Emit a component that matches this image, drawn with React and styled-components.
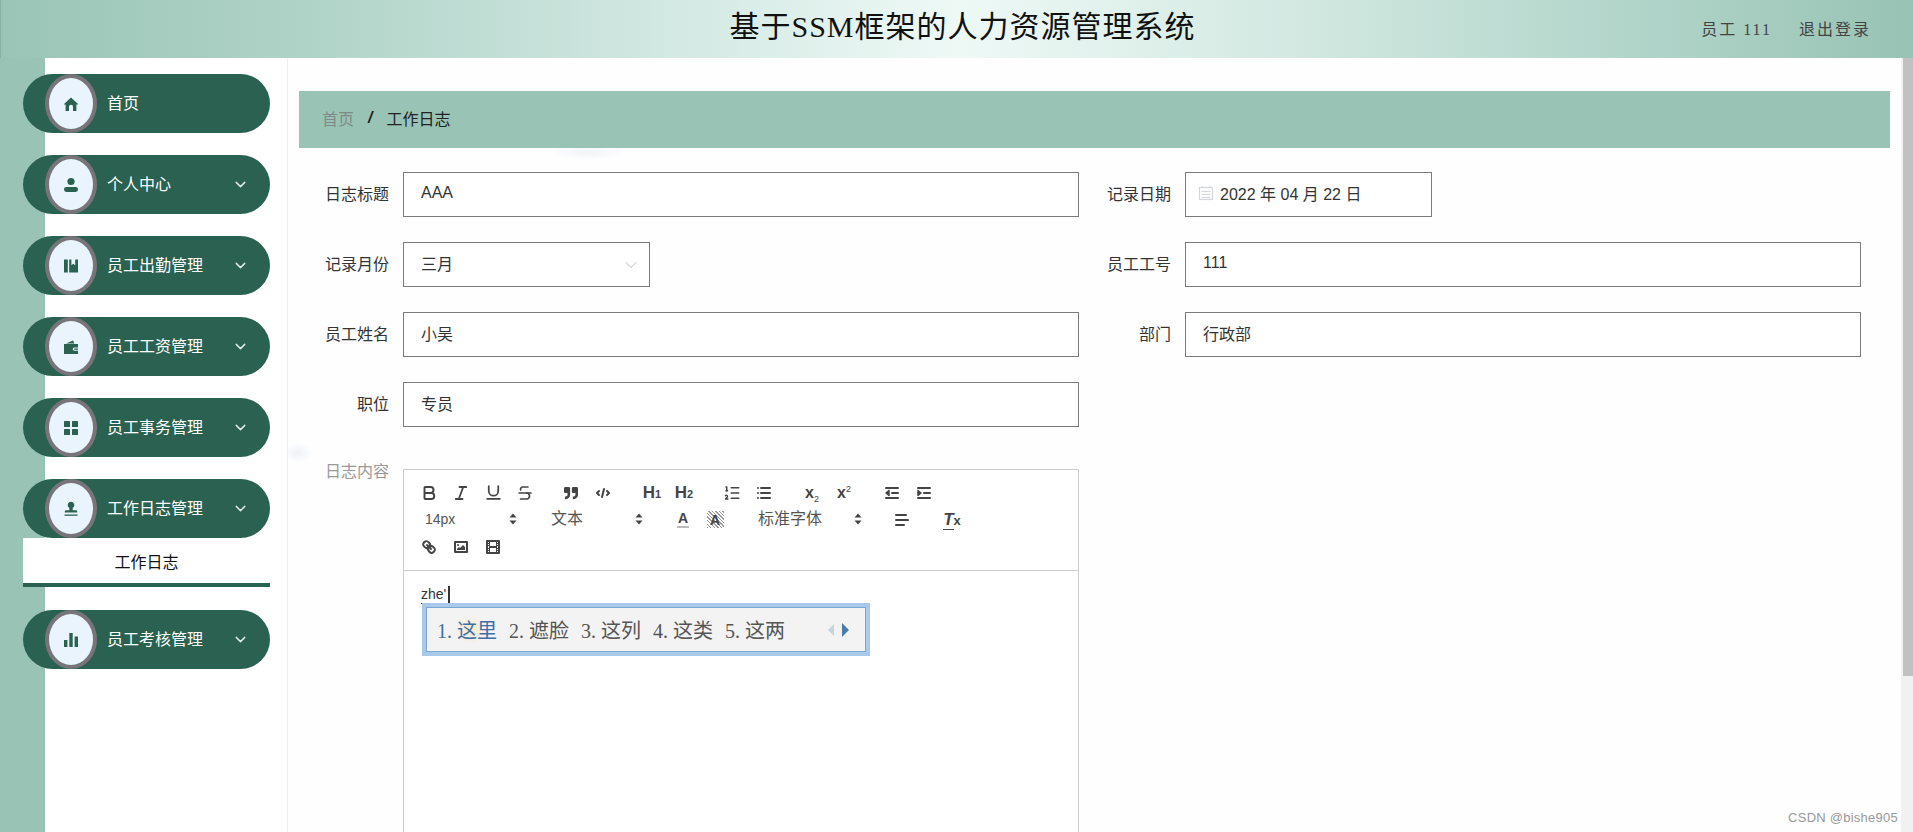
import React from 'react';
import styled, { createGlobalStyle } from 'styled-components';
import {
  Bold, Italic, Underline, Strikethrough, ListOrdered, ChevronDown,
} from 'lucide-react';
import { FaQuoteRight } from 'react-icons/fa';

const SERIF = '"Liberation Serif", "Noto Sans CJK SC", serif';
const SANS = '"Liberation Sans", "Noto Sans CJK SC", sans-serif';
const GREEN = '#2b6151';
const MINT = '#99c4b5';

const GlobalStyle = createGlobalStyle`
  html, body { margin: 0; padding: 0; height: 100%; overflow: hidden; background: #fff; }
  * { box-sizing: border-box; }
`;

const HomeIcon = () => (
  <svg width="16" height="16" viewBox="0 0 16 16" fill={GREEN}>
    <path d="M8 1.5 15 8v.5h-1.600V15H10v-4.300a2 2 0 0 0-4 0V15H2.600V8.500H1V8Z" />
  </svg>
);
const UserIcon = () => (
  <svg width="16" height="16" viewBox="0 0 16 16" fill={GREEN}>
    <circle cx="8" cy="4.500" r="3.600" />
    <rect x="1" y="10" width="14" height="5" rx="2.400" />
  </svg>
);
const BookIcon = () => (
  <svg width="16" height="16" viewBox="0 0 16 16" fill={GREEN}>
    <rect x="1" y="1.500" width="3.800" height="13" />
    <path d="M6.200 1.500h2.200v5.800l1.900-1.500 1.900 1.500V1.500H15v13H6.200Z" />
  </svg>
);
const WalletIcon = () => (
  <svg width="16" height="16" viewBox="0 0 16 16" fill={GREEN}>
    <path d="M3 4.500 10 1.500l1.400 3Z" />
    <path fillRule="evenodd" d="M1 5h14v3.400h-3.600a1.700 1.700 0 0 0 0 3.400H15V15H1Zm10.600 4.400h3.400v1.400h-3.400a.7.7 0 0 1 0-1.400Z" />
  </svg>
);
const GridIcon = () => (
  <svg width="16" height="16" viewBox="0 0 16 16" fill={GREEN}>
    <rect x="1" y="1" width="6" height="6" rx=".6" />
    <rect x="9" y="1" width="6" height="6" rx=".6" />
    <rect x="1" y="9" width="6" height="6" rx=".6" />
    <rect x="9" y="9" width="6" height="6" rx=".6" />
  </svg>
);
const StampIcon = () => (
  <svg width="16" height="16" viewBox="0 0 16 16" fill={GREEN}>
    <path d="M8 .8a3.300 3.300 0 0 0-2 5.900c.5.5.5 1.800.2 2.600H3a1.200 1.200 0 0 0-1.200 1.200v1h12.400v-1A1.200 1.200 0 0 0 13 9.300H9.800c-.3-.8-.3-2.100.2-2.600A3.300 3.300 0 0 0 8 .8Z" />
    <rect x="1.500" y="13.500" width="13" height="1.300" />
  </svg>
);
const ChartIcon = () => (
  <svg width="16" height="16" viewBox="0 0 16 16" fill={GREEN}>
    <rect x="1" y="8" width="3.400" height="7" />
    <rect x="6.300" y="1" width="3.400" height="14" />
    <rect x="11.600" y="4.500" width="3.400" height="10.500" />
  </svg>
);

const QlSvg = styled.svg.attrs({ viewBox: '0 0 18 18', width: 18, height: 18 })`
  fill: none;
  stroke: #444;
  stroke-width: 2;
  stroke-linecap: round;
  stroke-linejoin: round;
`;

const CodeIcon = () => (
  <QlSvg>
    <polyline points="5 7 3 9 5 11" />
    <polyline points="13 7 15 9 13 11" />
    <line x1="10" x2="8" y1="5" y2="13" />
  </QlSvg>
);
const BulletIcon = () => (
  <QlSvg>
    <line x1="6" x2="15" y1="4" y2="4" />
    <line x1="6" x2="15" y1="9" y2="9" />
    <line x1="6" x2="15" y1="14" y2="14" />
    <line x1="3" x2="3" y1="4" y2="4" />
    <line x1="3" x2="3" y1="9" y2="9" />
    <line x1="3" x2="3" y1="14" y2="14" />
  </QlSvg>
);
const OutdentIcon = () => (
  <QlSvg>
    <line x1="3" x2="15" y1="14" y2="14" />
    <line x1="3" x2="15" y1="4" y2="4" />
    <line x1="9" x2="15" y1="9" y2="9" />
    <polyline fill="#444" strokeWidth="1.500" points="6 6.500 6 11.500 3 9 6 6.500" />
  </QlSvg>
);
const IndentIcon = () => (
  <QlSvg>
    <line x1="3" x2="15" y1="14" y2="14" />
    <line x1="3" x2="15" y1="4" y2="4" />
    <line x1="9" x2="15" y1="9" y2="9" />
    <polyline fill="#444" strokeWidth="1.500" points="3 6.500 3 11.500 6 9 3 6.500" />
  </QlSvg>
);
const AlignIcon = () => (
  <QlSvg>
    <line x1="3" x2="13" y1="4" y2="4" />
    <line x1="3" x2="11" y1="14" y2="14" />
    <line x1="3" x2="15" y1="9" y2="9" />
  </QlSvg>
);
const LinkIcon = () => (
  <QlSvg>
    <line x1="7" x2="11" y1="7" y2="11" />
    <path d="M8.900 4.577a3.476 3.476 0 0 1 .36 4.679A3.476 3.476 0 0 1 4.577 8.900C3.185 7.500 2.035 6.400 4.217 4.217S7.500 3.185 8.900 4.577Z" />
    <path d="M13.423 9.100a3.476 3.476 0 0 0-4.679-.36 3.476 3.476 0 0 0 .36 4.679c1.392 1.392 2.500 2.542 4.679.36S14.815 10.500 13.423 9.100Z" />
  </QlSvg>
);
const ImageIcon = () => (
  <QlSvg>
    <rect width="12" height="10" x="3" y="4" />
    <circle cx="6" cy="7" r="1" fill="#444" stroke="none" />
    <polyline fill="#444" stroke="none" points="5 12 5 11 7 9 8 10 11 7 13 9 13 12 5 12" />
  </QlSvg>
);
const VideoIcon = () => (
  <QlSvg>
    <rect width="12" height="12" x="3" y="3" />
    <g fill="#444" stroke="none">
      <rect width="1" height="12" x="5" y="3" />
      <rect width="1" height="12" x="12" y="3" />
      <rect width="8" height="2" x="5" y="8" />
      <rect width="3" height="1" x="3" y="5" />
      <rect width="3" height="1" x="3" y="7" />
      <rect width="3" height="1" x="3" y="10" />
      <rect width="3" height="1" x="3" y="12" />
      <rect width="3" height="1" x="12" y="5" />
      <rect width="3" height="1" x="12" y="7" />
      <rect width="3" height="1" x="12" y="10" />
      <rect width="3" height="1" x="12" y="12" />
    </g>
  </QlSvg>
);
const PickerArrows = () => (
  <svg width="8" height="14" viewBox="0 0 8 14" fill="#444">
    <path d="M4 1.500 7.500 5.500H.5Z" />
    <path d="M4 12.500 7.500 8.500H.5Z" />
  </svg>
);
const CalendarIcon = () => (
  <svg width="16" height="16" viewBox="0 0 16 16" fill="none" stroke="#d3d6de" strokeWidth="1.200">
    <rect x="1.500" y="2.500" width="13" height="12" />
    <line x1="4.500" x2="4.500" y1="1" y2="3" />
    <line x1="11.500" x2="11.500" y1="1" y2="3" />
    <line x1="3.500" x2="12.500" y1="6.500" y2="6.500" />
    <line x1="3.500" x2="12.500" y1="9.500" y2="9.500" />
    <line x1="3.500" x2="12.500" y1="12.500" y2="12.500" />
  </svg>
);

const Page = styled.div`
  height: 832px;
  display: flex;
  flex-direction: column;
  overflow: hidden;
  position: relative;
  font-family: ${SANS};
`;

const Header = styled.header`
  flex: none;
  height: 58px;
  display: grid;
  grid-template-columns: 1fr auto 1fr;
  align-items: center;
  padding: 0 42px 0 53px;
  border-left: 1px solid #86b3a4;
  background: linear-gradient(90deg, #9ac5b6 0%, #aed2c6 15%, #cde5de 32%, #eef9f6 50%, #d2e8e1 68%, #b2d5ca 85%, #98c3b4 100%);
  font-family: ${SERIF};
`;

const Title = styled.h1`
  grid-column: 2;
  margin: 0 0 4px;
  font-size: 30px;
  line-height: 1.2;
  font-weight: 400;
  letter-spacing: 1px;
  color: #111;
`;

const UserBox = styled.div`
  grid-column: 3;
  justify-self: end;
  display: flex;
  gap: 27px;
  margin-bottom: 3px;
  font-size: 16px;
  letter-spacing: 2px;
  color: #444;
`;

const Body = styled.div`
  flex: 1;
  min-height: 0;
  display: flex;
`;

const Sidebar = styled.nav`
  flex: none;
  width: 288px;
  padding: 16px 17px 0 23px;
  border-right: 1px solid #f0f0f2;
  background: linear-gradient(90deg, ${MINT} 45px, #fff 45px);
`;

const MenuGroup = styled.div`
  margin-bottom: ${p => (p.$open ? 23 : 22)}px;
`;

const Pill = styled.div`
  height: 59px;
  display: flex;
  align-items: center;
  padding: 0 21px 0 22px;
  border-radius: 30px;
  background: ${GREEN};
  color: #fff;
  font-size: 16px;
`;

const IconCircle = styled.span`
  flex: none;
  width: 52px;
  height: 59px;
  margin-right: 10px;
  display: flex;
  align-items: center;
  justify-content: center;
  border: 4px solid #77757a;
  border-radius: 50%;
  background: #e9f4fd;
`;

const PillText = styled.span`
  margin-bottom: 3px;
`;

const PillChevron = styled(ChevronDown)`
  margin-left: auto;
  color: #dfe9e6;
`;

const SubItem = styled.div`
  height: 49px;
  display: flex;
  align-items: center;
  justify-content: center;
  border-bottom: 4px solid ${GREEN};
  background: #fff;
  color: #111;
  font-size: 16px;
`;

const Main = styled.main`
  flex: 1;
  min-width: 0;
  padding: 33px 11px 0 11px;
  background:
    radial-gradient(ellipse 14px 10px at 10px 395px, #eef1f5, transparent),
    radial-gradient(ellipse 40px 8px at 300px 94px, #f1f3f6, transparent),
    #feFEFF;
`;

const Crumbs = styled.div`
  height: 57px;
  display: flex;
  align-items: center;
  gap: 14px;
  padding: 0 0 3px 23px;
  background: ${MINT};
  font-size: 16px;
  color: #222;
`;

const CrumbLink = styled.span`
  color: #7f8a86;
`;

const CrumbSep = styled.span`
  font-weight: 700;
  font-style: italic;
  color: #222;
`;

const Form = styled.div`
  margin-top: 24px;
  display: grid;
  grid-template-columns: 782px 1fr;
  row-gap: 25px;
`;

const Field = styled.div`
  display: flex;
  align-items: ${p => (p.$top ? 'flex-start' : 'center')};
  gap: 14px;
  padding-right: ${p => (p.$right ? 29 : 2)}px;
  margin-top: ${p => p.$offset || 0}px;
  grid-column: ${p => (p.$full ? '1 / -1' : 'auto')};
`;

const Label = styled.label`
  flex: none;
  width: 90px;
  margin-top: ${p => (p.$muted ? -9 : 0)}px;
  text-align: right;
  font-size: 16px;
  line-height: 24px;
  color: ${p => (p.$muted ? '#999' : '#333')};
`;

const Control = styled.div`
  height: 45px;
  display: flex;
  align-items: center;
  flex: ${p => (p.$short ? 'none' : 1)};
  width: ${p => (p.$short ? '247px' : 'auto')};
  padding: 0 ${p => (p.$icon ? 12 : 17)}px 3px;
  gap: 6px;
  border: 1px solid #7b7b7b;
  background: #fff;
  font-size: 16px;
  color: #333;
`;

const SelectChevron = styled(ChevronDown)`
  margin: 4px -9px 0 auto;
  color: #b8bcc2;
`;

const Editor = styled.div`
  width: 676px;
  height: 500px;
  border: 1px solid #ccc;
  background: #fff;
  position: relative;
`;

const Toolbar = styled.div`
  height: 101px;
  padding: 9px 0 0 9px;
  border-bottom: 1px solid #ccc;
`;

const ToolRow = styled.div`
  height: 27px;
  display: flex;
  align-items: center;
`;

const ToolGroup = styled.div`
  display: flex;
  margin-right: ${p => p.$after || 0}px;
`;

const ToolButton = styled.span`
  width: 32px;
  height: 24px;
  display: flex;
  align-items: center;
  justify-content: center;
  color: #444;
`;

const HeadText = styled.span`
  font-size: 17px;
  font-weight: 700;
  color: #444;
  & > small { font-size: 11px; }
`;

const ScriptText = styled.span`
  font-size: 16px;
  font-weight: 700;
  color: #444;
  & > sub, & > sup { font-size: 9px; font-weight: 400; line-height: 0; }
`;

const ColorA = styled.span`
  font-size: 14px;
  line-height: 15px;
  font-weight: 700;
  color: #444;
  border-bottom: 2px solid #bbb;
  padding: 0 1px;
`;

const BackA = styled.span`
  width: 17px;
  height: 17px;
  display: flex;
  align-items: center;
  justify-content: center;
  font-size: 14px;
  font-weight: 700;
  color: #444;
  background: repeating-linear-gradient(45deg, #999 0 1px, #fff 1px 2.500px);
`;

const ClearText = styled.span`
  font-size: 17px;
  font-weight: 700;
  color: #444;
  & > i { border-bottom: 1px solid #444; }
  & > b { font-size: 13px; }
`;

const Picker = styled.div`
  display: flex;
  align-items: center;
  justify-content: space-between;
  width: ${p => p.$width}px;
  padding: 0 4px 2px ${p => p.$pad || 8}px;
  font-size: ${p => p.$size || 16}px;
  line-height: 20px;
  color: #555;
`;

const EditArea = styled.div`
  padding: 15px 17px;
  font-size: 14px;
  line-height: 17px;
  color: #333;
`;

const Typing = styled.span`
  display: inline-block;
  border-bottom: 1px dashed #333;
  padding-right: 2px;
  border-right: 2px solid #333;
`;

const CandBox = styled.div`
  position: absolute;
  left: 18px;
  top: 133px;
  width: 448px;
  height: 53px;
  display: flex;
  align-items: center;
  padding: 0 15px 0 11px;
  border: 4px solid #a9c9ea;
  outline: 1px solid #7ea6d1;
  outline-offset: -5px;
  background: #f3f3f3;
  font-family: ${SERIF};
  font-size: 20px;
  color: #555;
`;

const Cand = styled.span`
  width: 72px;
  flex: none;
  white-space: nowrap;
  color: ${p => (p.$active ? '#3f6fa3' : '#555')};
  background: ${p => (p.$active
    ? 'radial-gradient(circle 15px at 33px 50%, rgba(250, 222, 165, .55), transparent)'
    : 'none')};
`;

const CandArrows = styled.svg`
  margin-left: auto;
`;

const Scrollbar = styled.div`
  flex: none;
  width: 12px;
  padding-left: 2px;
  background: #f1f1f1;
`;

const Thumb = styled.div`
  height: ${p => p.$height}px;
  background: #c1c1c1;
`;

const Watermark = styled.div`
  position: absolute;
  right: 15px;
  bottom: 7px;
  font-size: 13px;
  letter-spacing: .25px;
  color: #999;
`;

const menu = [
  { name: '首页', icon: <HomeIcon />, leaf: true },
  { name: '个人中心', icon: <UserIcon /> },
  { name: '员工出勤管理', icon: <BookIcon /> },
  { name: '员工工资管理', icon: <WalletIcon /> },
  { name: '员工事务管理', icon: <GridIcon /> },
  { name: '工作日志管理', icon: <StampIcon />, sub: '工作日志' },
  { name: '员工考核管理', icon: <ChartIcon /> },
];

const candidates = ['1. 这里', '2. 遮脸', '3. 这列', '4. 这类', '5. 这两'];

export default function App() {
  return (
    <Page>
      <GlobalStyle />
      <Header>
        <Title>基于SSM框架的人力资源管理系统</Title>
        <UserBox>
          <span>员工 111</span>
          <span>退出登录</span>
        </UserBox>
      </Header>
      <Body>
        <Sidebar>
          {menu.map(item => (
            <MenuGroup key={item.name} $open={!!item.sub}>
              <Pill>
                <IconCircle>{item.icon}</IconCircle>
                <PillText>{item.name}</PillText>
                {!item.leaf && <PillChevron size={17} />}
              </Pill>
              {item.sub && <SubItem>{item.sub}</SubItem>}
            </MenuGroup>
          ))}
        </Sidebar>
        <Main>
          <Crumbs>
            <CrumbLink>首页</CrumbLink>
            <CrumbSep>/</CrumbSep>
            <span>工作日志</span>
          </Crumbs>
          <Form>
            <Field>
              <Label>日志标题</Label>
              <Control>AAA</Control>
            </Field>
            <Field $right>
              <Label>记录日期</Label>
              <Control $short $icon><CalendarIcon />2022 年 04 月 22 日</Control>
            </Field>
            <Field>
              <Label>记录月份</Label>
              <Control $short>三月<SelectChevron size={20} strokeWidth={1.2} /></Control>
            </Field>
            <Field $right>
              <Label>员工工号</Label>
              <Control>111</Control>
            </Field>
            <Field>
              <Label>员工姓名</Label>
              <Control>小吴</Control>
            </Field>
            <Field $right>
              <Label>部门</Label>
              <Control>行政部</Control>
            </Field>
            <Field>
              <Label>职位</Label>
              <Control>专员</Control>
            </Field>
            <Field $full $top $offset={17}>
              <Label $muted>日志内容</Label>
              <Editor>
                <Toolbar>
                  <ToolRow>
                    <ToolGroup $after={14}>
                      <ToolButton><Bold size={18} strokeWidth={2.6} /></ToolButton>
                      <ToolButton><Italic size={18} strokeWidth={2.4} /></ToolButton>
                      <ToolButton><Underline size={19} strokeWidth={2.2} /></ToolButton>
                      <ToolButton><Strikethrough size={18} strokeWidth={2.2} /></ToolButton>
                    </ToolGroup>
                    <ToolGroup $after={17}>
                      <ToolButton><FaQuoteRight size={14} /></ToolButton>
                      <ToolButton><CodeIcon /></ToolButton>
                    </ToolGroup>
                    <ToolGroup $after={16}>
                      <ToolButton><HeadText>H<small>1</small></HeadText></ToolButton>
                      <ToolButton><HeadText>H<small>2</small></HeadText></ToolButton>
                    </ToolGroup>
                    <ToolGroup $after={16}>
                      <ToolButton><ListOrdered size={18} strokeWidth={2} /></ToolButton>
                      <ToolButton><BulletIcon /></ToolButton>
                    </ToolGroup>
                    <ToolGroup $after={16}>
                      <ToolButton><ScriptText>x<sub>2</sub></ScriptText></ToolButton>
                      <ToolButton><ScriptText>x<sup>2</sup></ScriptText></ToolButton>
                    </ToolGroup>
                    <ToolGroup>
                      <ToolButton><OutdentIcon /></ToolButton>
                      <ToolButton><IndentIcon /></ToolButton>
                    </ToolGroup>
                  </ToolRow>
                  <ToolRow>
                    <ToolGroup $after={22}>
                      <Picker $width={108} $pad={12} $size={14}>14px<PickerArrows /></Picker>
                    </ToolGroup>
                    <ToolGroup $after={20}>
                      <Picker $width={104}>文本<PickerArrows /></Picker>
                    </ToolGroup>
                    <ToolGroup $after={19}>
                      <ToolButton><ColorA>A</ColorA></ToolButton>
                      <ToolButton><BackA>A</BackA></ToolButton>
                    </ToolGroup>
                    <ToolGroup $after={20}>
                      <Picker $width={116}>标准字体<PickerArrows /></Picker>
                    </ToolGroup>
                    <ToolGroup $after={18}>
                      <ToolButton><AlignIcon /></ToolButton>
                    </ToolGroup>
                    <ToolGroup>
                      <ToolButton><ClearText><i>T</i><b>x</b></ClearText></ToolButton>
                    </ToolGroup>
                  </ToolRow>
                  <ToolRow>
                    <ToolGroup>
                      <ToolButton><LinkIcon /></ToolButton>
                      <ToolButton><ImageIcon /></ToolButton>
                      <ToolButton><VideoIcon /></ToolButton>
                    </ToolGroup>
                  </ToolRow>
                </Toolbar>
                <EditArea><Typing>zhe'</Typing></EditArea>
                <CandBox>
                  {candidates.map((c, i) => (
                    <Cand key={c} $active={i === 0}>{c}</Cand>
                  ))}
                  <CandArrows width="24" height="14" viewBox="0 0 24 14">
                    <path d="M7 1v12L1 7Z" fill="#c5d3e2" />
                    <path d="M15 0v14l7-7Z" fill="#4a7ea8" />
                  </CandArrows>
                </CandBox>
              </Editor>
            </Field>
          </Form>
        </Main>
        <Scrollbar><Thumb $height={618} /></Scrollbar>
      </Body>
      <Watermark>CSDN @bishe905</Watermark>
    </Page>
  );
}
